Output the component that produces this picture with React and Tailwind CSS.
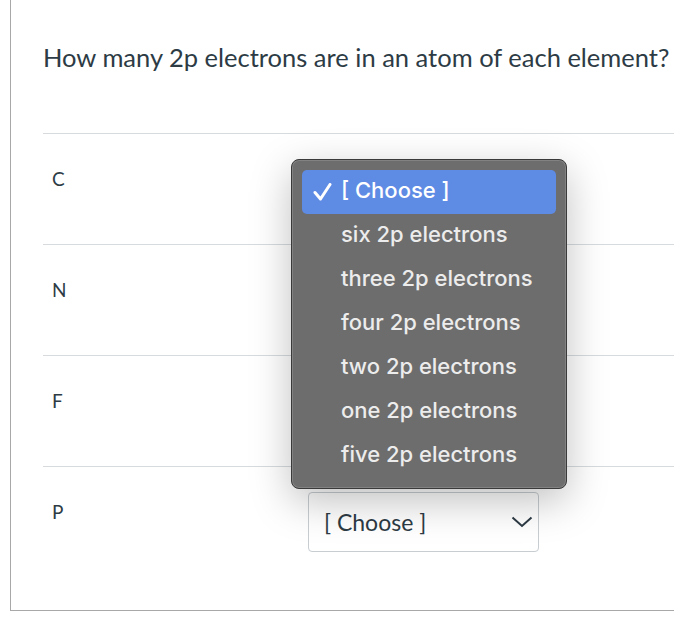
import React from "react";

const rows = ["C", "N", "F", "P"];
const options = [
  "[ Choose ]",
  "six 2p electrons",
  "three 2p electrons",
  "four 2p electrons",
  "two 2p electrons",
  "one 2p electrons",
  "five 2p electrons",
];

function Chevron() {
  return (
    <svg width="22" height="12" viewBox="0 0 22 12" fill="none">
      <polyline points="1.5,1.5 11,10 20.5,1.5" stroke="#2d3b45" strokeWidth="2" />
    </svg>
  );
}

function SelectBox() {
  return (
    <div className="w-[231px] h-[60px] border border-[#c7cdd1] rounded-[4px] bg-white flex items-center justify-between pl-[15px] pr-[5px]">
      <span className="text-[23px] text-[#2d3b45]">[ Choose ]</span>
      <Chevron />
    </div>
  );
}

function Menu() {
  return (
    <div
      className="absolute left-[291px] top-[159px] w-[276px] h-[330px] rounded-[8px] bg-[#6d6d6d] border border-[#3a3a3a] p-[10px] shadow-[0_12px_40px_rgba(0,0,0,0.25),inset_0_0_0_1px_rgba(255,255,255,0.15)]"
      style={{ fontFamily: 'Inter, "Liberation Sans", Arial, sans-serif' }}
    >
      {options.map((o, i) => (
        <div
          key={o}
          className={
            "h-[44px] flex items-center rounded-[5px] text-[22px] font-medium pb-[3px] " +
            (i === 0 ? "bg-[#5e8be4] text-white" : "text-[#ececec]")
          }
        >
          <span className="w-[39px] pl-[11px] pt-[3px] flex items-center">
            {i === 0 && (
              <svg width="19" height="18" viewBox="0 0 19 18" fill="none">
                <polyline points="2,9.5 7.5,16 17,1.5" stroke="white" strokeWidth="3" strokeLinecap="round" strokeLinejoin="round" />
              </svg>
            )}
          </span>
          <span>{o}</span>
        </div>
      ))}
    </div>
  );
}

export default function App() {
  return (
    <div className="relative w-[674px] h-[638px] bg-white overflow-hidden" style={{ fontFamily: "Lato, 'Liberation Sans', sans-serif" }}>
      <div className="ml-[10px] h-[611px] border-l border-b border-[#a8a8a8] pl-[32px]">
        <h1 className="pt-[39px] pb-[58px] text-[25.5px] leading-[36px] text-[#2d3b45] whitespace-nowrap">
          How many 2p electrons are in an atom of each element?
        </h1>
        {rows.map((r) => (
          <div key={r} className="border-t border-[#d7dbde] flex items-start pt-[25px] pb-[25px]">
            <div className="w-[265px] pl-[9px] pt-[8px] text-[19px] leading-[24px] text-[#2d3b45]">{r}</div>
            <SelectBox />
          </div>
        ))}
      </div>
      <Menu />
    </div>
  );
}
